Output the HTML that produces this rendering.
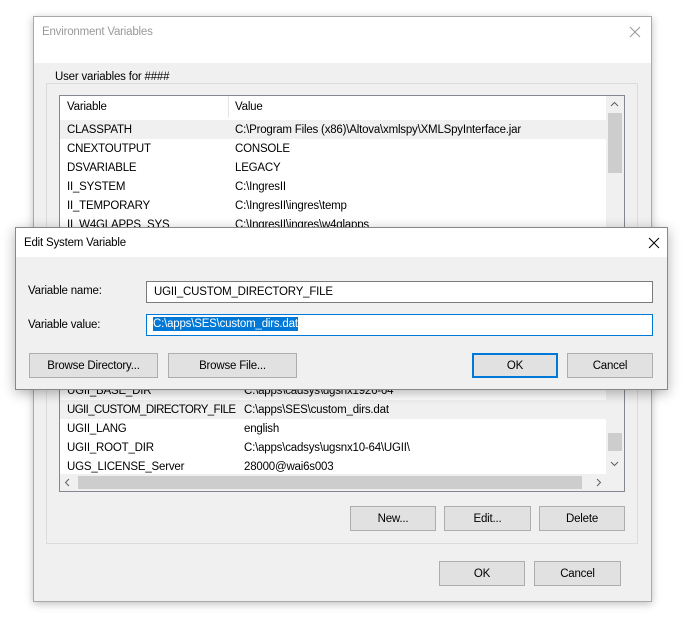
<!DOCTYPE html>
<html><head><style>
*{box-sizing:border-box;margin:0;padding:0}
body{width:687px;height:630px;background:#fff;font-family:"Liberation Sans",sans-serif;font-size:11.5px;letter-spacing:-0.2px;color:#000;position:relative;overflow:hidden}
.abs{position:absolute}
.btn{position:absolute;background:#e1e1e1;border:1px solid #adadad;text-align:center;line-height:24px;height:25px}
.row{position:absolute;left:60px;width:546px;height:19px;line-height:21px;white-space:nowrap}
.row span{position:absolute}
</style></head><body>
<div class="abs" style="left:33px;top:16px;width:619px;height:586px;border:1px solid #aaa;background:#f0f0f0;box-shadow:0 2px 8px rgba(0,0,0,.25)">
 <div class="abs" style="left:0;top:0;width:617px;height:46px;background:#fff"></div>
 <div class="abs" style="left:8px;top:9px;color:#999">Environment Variables</div>
 <svg class="abs" style="left:595px;top:9px" width="12" height="12"><path d="M1 1L11 11M11 1L1 11" stroke="#999" stroke-width="1"/></svg>
</div>
<div class="abs" style="left:46px;top:83px;width:592px;height:461px;border:1px solid #dcdcdc"></div>
<div class="abs" style="left:52px;top:71px;background:#f0f0f0;padding:0 3px">User variables for ####</div>
<div class="abs" style="left:59px;top:95px;width:566px;height:397px;border:1px solid #828790;background:#fff"></div>
<div class="abs" style="left:67px;top:101px">Variable</div>
<div class="abs" style="left:228px;top:96px;width:1px;height:22px;background:#e5e5e5"></div>
<div class="abs" style="left:235px;top:101px">Value</div>
<div class="row" style="top:120px;background:#f0f0f0"><span style="left:7px">CLASSPATH</span><span style="left:175px">C:\Program Files (x86)\Altova\xmlspy\XMLSpyInterface.jar</span></div>
<div class="row" style="top:139px"><span style="left:7px">CNEXTOUTPUT</span><span style="left:175px">CONSOLE</span></div>
<div class="row" style="top:158px"><span style="left:7px">DSVARIABLE</span><span style="left:175px">LEGACY</span></div>
<div class="row" style="top:177px"><span style="left:7px">II_SYSTEM</span><span style="left:175px">C:\IngresII</span></div>
<div class="row" style="top:196px"><span style="left:7px">II_TEMPORARY</span><span style="left:175px">C:\IngresII\ingres\temp</span></div>
<div class="row" style="top:215px"><span style="left:7px">II_W4GLAPPS_SYS</span><span style="left:175px">C:\IngresII\ingres\w4glapps</span></div>
<div class="row" style="top:381px"><span style="left:7px">UGII_BASE_DIR</span><span style="left:184px">C:\apps\cadsys\ugsnx1926-64</span></div>
<div class="row" style="top:400px;background:#f0f0f0"><span style="left:7px;letter-spacing:-0.6px">UGII_CUSTOM_DIRECTORY_FILE</span><span style="left:184px">C:\apps\SES\custom_dirs.dat</span></div>
<div class="row" style="top:419px"><span style="left:7px">UGII_LANG</span><span style="left:184px">english</span></div>
<div class="row" style="top:438px"><span style="left:7px">UGII_ROOT_DIR</span><span style="left:184px">C:\apps\cadsys\ugsnx10-64\UGII\</span></div>
<div class="row" style="top:457px"><span style="left:7px">UGS_LICENSE_Server</span><span style="left:184px">28000@wai6s003</span></div>
<div class="abs" style="left:606px;top:96px;width:18px;height:378px;background:#f0f0f0"></div>
<svg class="abs" style="left:610px;top:101px" width="9" height="6"><path d="M1 5L4.5 1.5L8 5" stroke="#606060" fill="none"/></svg>
<div class="abs" style="left:608px;top:113px;width:14px;height:60px;background:#cdcdcd"></div>
<div class="abs" style="left:608px;top:433px;width:14px;height:18px;background:#cdcdcd"></div>
<svg class="abs" style="left:610px;top:461px" width="9" height="6"><path d="M1 1L4.5 4.5L8 1" stroke="#606060" fill="none"/></svg>
<div class="abs" style="left:60px;top:474px;width:564px;height:17px;background:#f0f0f0"></div>
<svg class="abs" style="left:64px;top:478px" width="6" height="9"><path d="M5 1L1.5 4.5L5 8" stroke="#606060" fill="none"/></svg>
<div class="abs" style="left:78px;top:476px;width:504px;height:13px;background:#cdcdcd"></div>
<svg class="abs" style="left:596px;top:478px" width="6" height="9"><path d="M1 1L4.5 4.5L1 8" stroke="#606060" fill="none"/></svg>
<div class="btn" style="left:350px;top:506px;width:86px">New...</div>
<div class="btn" style="left:444px;top:506px;width:87px">Edit...</div>
<div class="btn" style="left:539px;top:506px;width:86px">Delete</div>
<div class="btn" style="left:439px;top:561px;width:86px">OK</div>
<div class="btn" style="left:534px;top:561px;width:87px">Cancel</div>
<div class="abs" style="left:15px;top:227px;width:653px;height:163px;border:1px solid #888;background:#f0f0f0;box-shadow:0 3px 12px rgba(0,0,0,.3)">
 <div class="abs" style="left:0;top:0;width:651px;height:29px;background:#fff"></div>
 <div class="abs" style="left:8px;top:9px">Edit System Variable</div>
 <svg class="abs" style="left:632px;top:9px" width="12" height="12"><path d="M1 1L11 11M11 1L1 11" stroke="#000" stroke-width="1"/></svg>
</div>
<div class="abs" style="left:28px;top:285px">Variable name:</div>
<div class="abs" style="left:146px;top:281px;width:507px;height:22px;border:1px solid #7a7a7a;background:#fff;padding:4px 0 0 7px">UGII_CUSTOM_DIRECTORY_FILE</div>
<div class="abs" style="left:28px;top:319px">Variable value:</div>
<div class="abs" style="left:146px;top:314px;width:507px;height:22px;border:1px solid #0078d7;background:#fff;padding:3px 0 0 6px"><span style="background:#0078d7;color:#fff;padding:1px 0">C:\apps\SES\custom_dirs.dat</span></div>
<div class="btn" style="left:29px;top:353px;width:129px">Browse Directory...</div>
<div class="btn" style="left:168px;top:353px;width:129px">Browse File...</div>
<div class="btn" style="left:472px;top:353px;width:86px;border:2px solid #0078d7;line-height:22px">OK</div>
<div class="btn" style="left:567px;top:353px;width:86px">Cancel</div>
</body></html>
